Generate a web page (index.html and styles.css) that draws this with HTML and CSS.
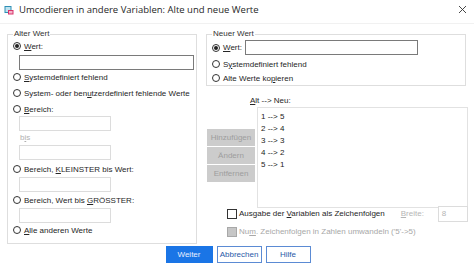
FILE: index.html
```html
<!DOCTYPE html>
<html lang="de">
<head>
<meta charset="utf-8">
<title>Umcodieren</title>
<link rel="stylesheet" href="styles.css">
</head>
<body>
<div class="window">
  <div class="titlebar">
    <svg class="appicon" width="10" height="10" viewBox="0 0 10 10">
      <rect x="0.5" y="1" width="7" height="7" fill="#2e8fb5"/>
      <rect x="1.5" y="2" width="5" height="5" fill="#bfe3f0"/>
      <path d="M4 5 L9.5 5 L9.5 9.5 L4 9.5 Z" fill="#d8336a"/>
      <path d="M5 6 L8.5 6 L8.5 8.5 L5 8.5 Z" fill="#f3b7cb"/>
    </svg>
    <span class="title">Umcodieren in andere Variablen: Alte und neue Werte</span>
    <svg class="close" width="9" height="9" viewBox="0 0 9 9">
      <path d="M1 1 L8 8 M8 1 L1 8" stroke="#333" stroke-width="0.9"/>
    </svg>
  </div>

  <div class="content">
    <fieldset class="group old">
      <legend>Alter Wert</legend>
      <div class="radio sel"><span class="dot"></span><span><u>W</u>ert:</span></div>
      <div class="field active wide m2"></div>
      <div class="radio"><span class="dot"></span><span><u>S</u>ystemdefiniert fehlend</span></div>
      <div class="radio m2"><span class="dot"></span><span>System- oder ben<u>u</u>tzerdefiniert fehlende Werte</span></div>
      <div class="radio m2"><span class="dot"></span><span><u>B</u>ereich:</span></div>
      <div class="field short"></div>
      <div class="bis">b<u>i</u>s</div>
      <div class="field short"></div>
      <div class="radio m2"><span class="dot"></span><span>Bereich, <u>K</u>LEINSTER bis Wert:</span></div>
      <div class="field short m1"></div>
      <div class="radio m1"><span class="dot"></span><span>Bereich, Wert bis <u>G</u>RÖSSTER:</span></div>
      <div class="field short m1"></div>
      <div class="radio"><span class="dot"></span><span><u>A</u>lle anderen Werte</span></div>
    </fieldset>

    <div class="right">
      <fieldset class="group new">
        <legend>Neuer Wert</legend>
        <div class="radio sel wertrow"><span class="dot"></span><span><u>W</u>ert:</span><div class="field active newval"></div></div>
        <div class="radio m1"><span class="dot"></span><span>S<u>y</u>stemdefiniert fehlend</span></div>
        <div class="radio"><span class="dot"></span><span>Alte Werte ko<u>p</u>ieren</span></div>
      </fieldset>

      <div class="altneu"><u>A</u>lt --&gt; Neu:</div>
      <div class="listarea">
        <div class="sidebtns">
          <div class="gbtn">Hinzufügen</div>
          <div class="gbtn">Ändern</div>
          <div class="gbtn">Entfernen</div>
        </div>
        <div class="list">
          <div>1 --&gt; 5</div>
          <div>2 --&gt; 4</div>
          <div>3 --&gt; 3</div>
          <div>4 --&gt; 2</div>
          <div>5 --&gt; 1</div>
        </div>
      </div>
      <div class="check first">
        <span class="box"></span><span>Ausgabe der <u>V</u>ariablen als Zeichenfolgen</span>
        <span class="breite"><u>B</u>reite:</span>
        <span class="field num">8</span>
      </div>
      <div class="check disabled">
        <span class="box"></span><span>Nu<u>m</u>. Zeichenfolgen in Zahlen umwandeln ('5'-&gt;5)</span>
      </div>
    </div>
  </div>

  <div class="footer">
    <div class="btn primary">Weiter</div>
    <div class="btn">Abbrechen</div>
    <div class="btn">Hilfe</div>
  </div>
</div>
</body>
</html>
```

FILE: styles.css
```css
* { box-sizing: border-box; }
html, body {
  margin: 0;
  padding: 0;
  background: #ffffff;
}
body {
  width: 474px;
  height: 270px;
  overflow: hidden;
  font-family: "Liberation Sans", Arial, sans-serif;
  font-size: 8px;
  color: #262626;
}
u { text-decoration: underline; text-underline-offset: 1px; }

.window { width: 474px; height: 270px; display: flex; flex-direction: column; }

.titlebar {
  height: 24px;
  display: flex;
  align-items: center;
  padding: 0 7px 4px 4px;
  border-bottom: 1px solid #f1f1f1;
}
.appicon { flex: none; margin-right: 5px; }
.title { flex: 1; font-family: "Open Sans", sans-serif; font-size: 9.5px; color: #1f1f1f; }
.close { flex: none; }

.content {
  display: flex;
  padding: 5px 0 0 7px;
  height: 216px;
}

.group {
  margin: 0;
  border: 1px solid #dedede;
  padding: 0 0 0 5px;
}
.group legend {
  padding: 0 1px;
  margin-left: 0;
  font-size: 8px;
  color: #333;
  line-height: 10px;
}
.old {
  width: 190px;
  height: 215px;
  display: flex;
  flex-direction: column;
}
.right {
  margin-left: 9px;
  width: 262px;
  display: flex;
  flex-direction: column;
}
.new {
  width: 260px;
  height: 57px;
  display: flex;
  flex-direction: column;
  padding-top: 0;
}

.radio {
  height: 14px;
  display: flex;
  align-items: center;
  white-space: nowrap;
}
.radio .dot {
  flex: none;
  width: 8px;
  height: 8px;
  border: 1px solid #333;
  border-radius: 50%;
  margin-right: 3px;
  position: relative;
}
.radio.sel .dot::after {
  content: "";
  position: absolute;
  left: 1px; top: 1px;
  width: 4px; height: 4px;
  border-radius: 50%;
  background: #222;
}
.m1 { margin-top: 1px; }
.m2 { margin-top: 2px; }

.field {
  height: 15px;
  border: 1px solid #dcdcdc;
  background: #fff;
  margin-left: 6px;
  flex: none;
}
.field.active { border-color: #7a7a7a; }
.field.wide { width: 175px; }
.field.short { width: 92px; }
.bis {
  height: 14px;
  margin-left: 7px;
  line-height: 14px;
  color: #b0b0b0;
  margin-top: 0;
}

.wertrow { height: 17px; margin-top: 0; }
.newval { width: 173px; margin-left: 3px; }

.altneu {
  margin: 10px 0 0 44px;
  height: 9px;
  line-height: 9px;
}
.listarea {
  display: flex;
  margin-top: 2px;
}
.sidebtns {
  width: 48px;
  margin-left: 1px;
  padding-top: 22px;
  display: flex;
  flex-direction: column;
  gap: 1px;
}
.gbtn {
  height: 17px;
  background: #cccccc;
  color: #9d9d9d;
  text-align: center;
  line-height: 17px;
  font-size: 8px;
}
.list {
  margin-left: 2px;
  width: 211px;
  height: 101px;
  border: 1px solid #e2e2e2;
  padding: 3px 0 0 3px;
  line-height: 12px;
  color: #222;
}

.check {
  display: flex;
  align-items: center;
  margin-left: 21px;
  height: 15px;
  white-space: nowrap;
}
.check.first { margin-top: -2px; }
.check .box {
  flex: none;
  width: 10px;
  height: 10px;
  border: 1px solid #333;
  margin-right: 2px;
}
.breite { margin-left: 16px; color: #b5b5b5; width: 34px; }
.field.num {
  margin-left: 3px;
  width: 30px;
  height: 16px;
  color: #b5b5b5;
  padding-left: 3px;
  line-height: 14px;
}
.check.disabled { margin-top: 3px; color: #a8a8a8; }
.check.disabled .box { background: #c6c6c6; border-color: #a8a8a8; }

.footer {
  display: flex;
  justify-content: center;
  gap: 4px;
  padding-top: 6px;
  padding-left: 2px;
}
.btn {
  width: 45px;
  height: 17px;
  border: 1px solid #5b8bd4;
  color: #2a5aa8;
  text-align: center;
  line-height: 15px;
  font-size: 8px;
}
.btn.primary {
  width: 47px;
  background: #1a75e6;
  border-color: #1a75e6;
  color: #e8f0ff;
}
```
